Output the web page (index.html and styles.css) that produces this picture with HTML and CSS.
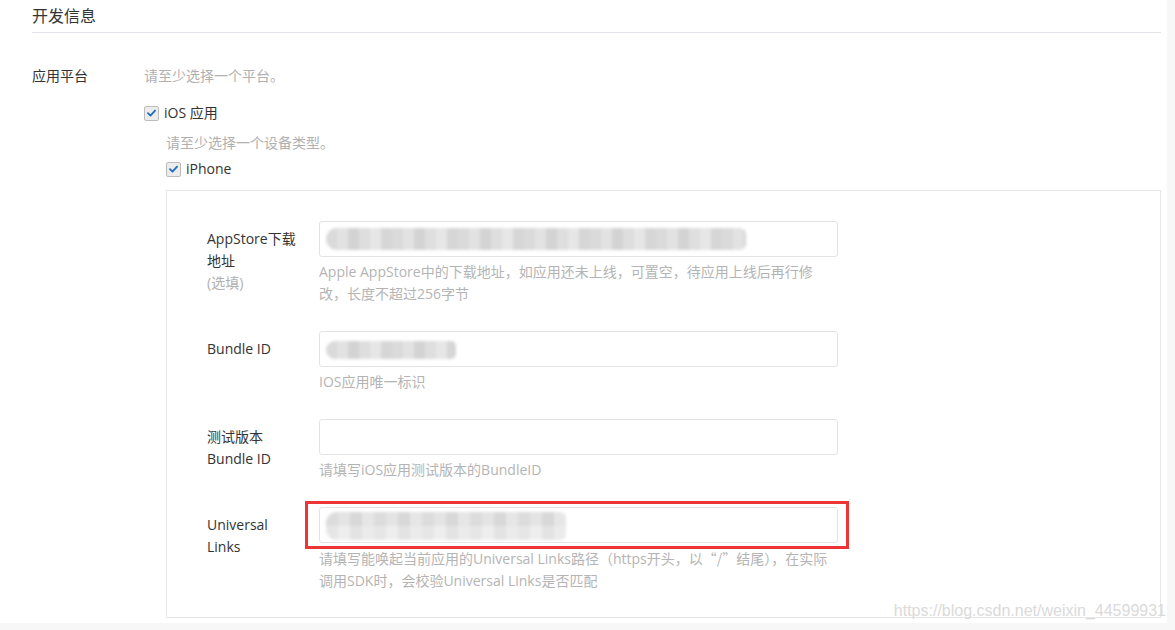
FILE: index.html
```html
<!DOCTYPE html>
<html lang="zh-CN">
<head>
<meta charset="utf-8">
<title>开发信息</title>
<link rel="stylesheet" href="styles.css">
</head>
<body>
<div class="page">
  <div class="title">开发信息</div>
  <div class="field-row">
    <div class="field-label">应用平台</div>
    <div class="field-body">
      <div class="hint">请至少选择一个平台。</div>
      <label class="check-row first">
        <span class="box"><svg viewBox="0 0 14 14" width="14" height="14"><path d="M3.2 7.2 L5.9 9.8 L10.8 4.4" fill="none" stroke="#1f6fc6" stroke-width="2" stroke-linecap="round" stroke-linejoin="round"/></svg></span>
        <span class="check-text">iOS 应用</span>
      </label>
      <div class="sub">
        <div class="hint sub-hint">请至少选择一个设备类型。</div>
        <label class="check-row second">
          <span class="box"><svg viewBox="0 0 14 14" width="14" height="14"><path d="M3.2 7.2 L5.9 9.8 L10.8 4.4" fill="none" stroke="#1f6fc6" stroke-width="2" stroke-linecap="round" stroke-linejoin="round"/></svg></span>
          <span class="check-text">iPhone</span>
        </label>
        <div class="panel">
          <div class="form-row">
            <div class="form-label">AppStore下载<br>地址<br><span class="optional">(选填)</span></div>
            <div class="form-control">
              <div class="input"><span class="mosaic w-long"></span></div>
              <div class="form-hint">Apple AppStore中的下载地址，如应用还未上线，可置空，待应用上线后再行修<br>改，长度不超过256字节</div>
            </div>
          </div>
          <div class="form-row">
            <div class="form-label">Bundle ID</div>
            <div class="form-control">
              <div class="input"><span class="mosaic w-short"></span></div>
              <div class="form-hint">IOS应用唯一标识</div>
            </div>
          </div>
          <div class="form-row">
            <div class="form-label">测试版本<br>Bundle ID</div>
            <div class="form-control">
              <div class="input"></div>
              <div class="form-hint">请填写iOS应用测试版本的BundleID</div>
            </div>
          </div>
          <div class="form-row">
            <div class="form-label">Universal<br>Links</div>
            <div class="form-control">
              <div class="input marked"><span class="mosaic w-mid"></span><span class="highlight"></span></div>
              <div class="form-hint">请填写能唤起当前应用的Universal Links路径（https开头，以<span class="cjk">“/”</span>结尾），在实际<br>调用SDK时，会校验Universal Links是否匹配</div>
            </div>
          </div>
        </div>
      </div>
    </div>
  </div>
</div>
<div class="watermark">https://blog.csdn.net/weixin_44599931</div>
</body>
</html>
```
FILE: styles.css
```css
html, body {
  margin: 0;
  padding: 0;
}
body {
  background: #f7f7f7;
  font-family: "Open Sans", "Noto Sans CJK SC", sans-serif;
  font-size: 14px;
  color: #333;
  width: 1175px;
  height: 630px;
  overflow: hidden;
  position: relative;
}
.page {
  box-sizing: border-box;
  width: 1167px;
  height: 623px;
  background: #fff;
  padding: 0 6px 0 32px;
  overflow: hidden;
}
.title {
  font-size: 16px;
  line-height: 24px;
  padding: 4px 0 4px;
  border-bottom: 1px solid #e4e4ec;
  color: #333;
}
.field-row {
  display: flex;
  margin-top: 32px;
}
.field-label {
  width: 112px;
  flex: none;
  line-height: 22px;
}
.field-body {
  flex: 1;
}
.hint {
  line-height: 22px;
  color: #b0b0b0;
  font-size: 14px;
}
.check-row {
  display: flex;
  align-items: center;
  height: 22px;
  line-height: 22px;
}
.check-row.first {
  margin-top: 15px;
}
.check-row.second {
  margin-top: 4px;
}
.box {
  box-sizing: border-box;
  width: 15px;
  height: 15px;
  border: 1px solid #bcbcbc;
  border-radius: 2px;
  background: #ececec;
  display: flex;
  align-items: center;
  justify-content: center;
}
.box svg {
  display: block;
}
.check-text {
  margin-left: 5px;
  color: #333;
}
.sub {
  padding-left: 22px;
}
.sub-hint {
  margin-top: 8px;
}
.panel {
  margin-top: 10px;
  border: 1px solid #e6e6e6;
  padding: 30px 0 25px 40px;
  display: flex;
  flex-direction: column;
  gap: 26px;
}
.form-row {
  display: flex;
}
.form-label {
  width: 112px;
  flex: none;
  padding-top: 7px;
  line-height: 22px;
  color: #333;
}
.optional {
  color: #b0b0b0;
}
.form-control {
  width: 560px;
}
.input {
  box-sizing: border-box;
  width: 519px;
  height: 36px;
  border: 1px solid #e3e3e3;
  border-radius: 3px;
  background: #fff;
  padding: 6px 0 0 6px;
  position: relative;
}
.mosaic {
  display: block;
  height: 22px;
  border-radius: 11px 6px 6px 11px;
  filter: blur(1.8px);
  background: repeating-linear-gradient(90deg,
    #dadada 0 11px, #e2e2e2 11px 22px, #d3d3d3 22px 33px,
    #dedede 33px 44px, #e6e6e6 44px 55px, #d6d6d6 55px 66px);
}
.w-long {
  width: 420px;
}
.w-short {
  width: 130px;
  height: 18px;
  margin-top: 3px;
}
.w-mid {
  width: 240px;
  height: 28px;
  margin-top: -2px;
  background:
    repeating-linear-gradient(90deg,
      #e6e6e6 0 12px, #eeeeee 12px 24px, #e3e3e3 24px 36px, #ebebeb 36px 48px) 0 14px / 100% 14px no-repeat,
    repeating-linear-gradient(90deg,
      #dcdcdc 0 12px, #e4e4e4 12px 24px, #d8d8d8 24px 36px, #e6e6e6 36px 48px) 0 0 / 100% 14px no-repeat;
}
.highlight {
  position: absolute;
  left: -15px;
  top: -7px;
  width: 544px;
  height: 48px;
  box-sizing: border-box;
  border: 3px solid #ee3535;
}
.form-hint {
  margin-top: 4px;
  line-height: 22px;
  color: #b4b4b4;
  font-size: 14px;
  white-space: nowrap;
}
.cjk {
  font-family: "Noto Sans CJK SC", sans-serif;
}
.watermark {
  position: absolute;
  right: 9px;
  top: 600px;
  font-family: "Liberation Sans", sans-serif;
  font-size: 16px;
  line-height: 22px;
  color: #dadada;
}
```
